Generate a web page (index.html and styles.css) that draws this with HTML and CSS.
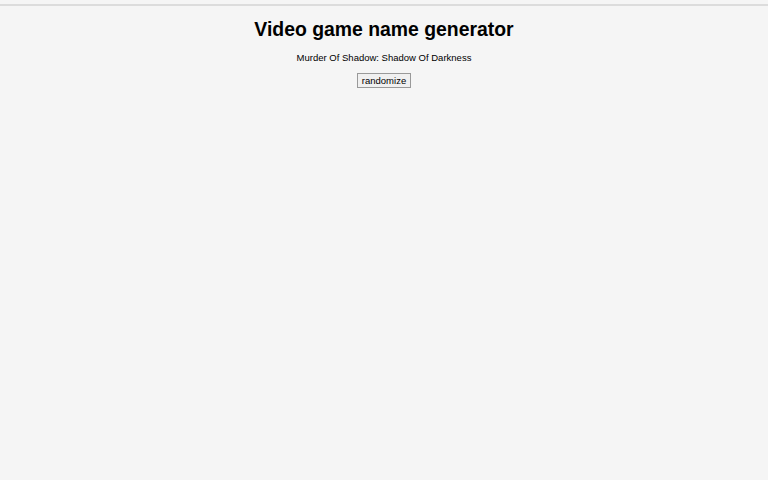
FILE: index.html
```html
<!DOCTYPE html>
<html lang="en">
    <head>
        <meta charset="UTF-8"/>
        <meta name="viewport" content="width=device-width, initial-scale=1.0"/>
        <title>Video game name generator</title>
        <link rel="stylesheet" href="styles.css">
    </head>
    <body>
        <div class="topbar"></div>
        <div class="container">
            <h1>Video game name generator</h1>
            <p id="name">Murder Of Shadow: Shadow Of Darkness</p>
            <button class="randomize" onclick="randomize()">randomize</button>
        </div>
        <script>
            const first = ["Murder", "Legend", "Rise", "Call", "Curse", "Return"];
            const second = ["Shadow", "Darkness", "Fire", "Doom", "Steel", "Blood"];

            function pick(list) {
                return list[Math.floor(Math.random() * list.length)];
            }

            function randomize() {
                const name = pick(first) + " Of " + pick(second) + ": " + pick(second) + " Of " + pick(second);
                document.getElementById("name").textContent = name;
            }
        </script>
    </body>
</html>
```

FILE: styles.css
```css
body {
    font-family: "Liberation Sans", Arial, sans-serif;
    background: #f5f5f5;
    color: #000;
    margin: 0;
}

.topbar {
    height: 4px;
    border-bottom: 2px solid #dcdcdc;
}

.container {
    display: flex;
    flex-direction: column;
    align-items: center;
    text-align: center;
}

h1 {
    font-size: 19.4px;
    line-height: 22px;
    margin: 12px 0 0;
}

#name {
    font-size: 9.5px;
    line-height: 11px;
    margin: 12px 0 0;
}

.randomize {
    font-family: "Liberation Sans", Arial, sans-serif;
    font-size: 9.5px;
    line-height: 11px;
    margin-top: 10px;
    padding: 1px 4px;
    background: #f0f0f0;
    border: 1px solid #999;
    border-radius: 0;
    color: #000;
}
```
